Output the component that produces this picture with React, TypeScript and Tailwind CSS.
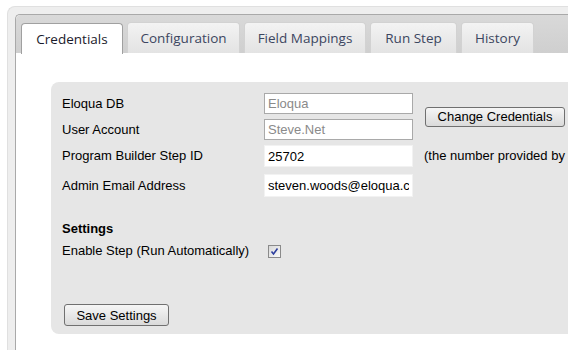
import React from "react";

const tabs = [
    { label: "Credentials", width: "w-[102px]", active: true },
    { label: "Configuration", width: "w-[113px]", active: false },
    { label: "Field Mappings", width: "w-[122px]", active: false },
    { label: "Run Step", width: "w-[87px]", active: false },
    { label: "History", width: "w-[73px]", active: false },
];

function TextField({ value, readOnly, height }: { value: string; readOnly?: boolean; height: string }) {
    return (
        <input
            type="text"
            readOnly
            value={value}
            className={`${height} w-[149px] shrink-0 bg-white px-[3px] text-[13px] outline-none ${
                readOnly ? "border border-[#a9a9a9] text-[#8a8a8a]" : "border border-[#f2f2f2] text-black"
            }`}
        />
    );
}

function OldButton({ children, className }: { children: React.ReactNode; className: string }) {
    return (
        <button
            type="button"
            className={`${className} shrink-0 rounded-[3px] border border-[#707070] bg-gradient-to-b from-[#f6f6f6] to-[#dadada] text-[13px] leading-none text-black`}
        >
            {children}
        </button>
    );
}

export default function App() {
    return (
        <div className="h-[350px] w-[568px] overflow-hidden bg-white font-['Liberation_Sans',Arial,sans-serif]">
            <div className="ml-[7px] mt-[6px] h-[400px] w-[640px] rounded-tl-[8px] border-l border-t border-[#e0e0e0] bg-[#eeeeee] pl-[7px] pt-[7px]">
                <div className="h-full rounded-tl-[5px] border-l border-t border-[#a9a9a9]">
                    {/* tab strip */}
                    <div className="flex h-[38px] items-end gap-[4px] rounded-tl-[5px] bg-gradient-to-b from-[#d9d9d9] to-[#cfcfcf] pl-[5px]">
                        {tabs.map((tab) => (
                            <div
                                key={tab.label}
                                className={`${tab.width} flex h-[31px] items-center justify-center rounded-t-[4px] border border-b-0 font-['Open_Sans',sans-serif] text-[13.5px] ${
                                    tab.active
                                        ? "relative top-px border-[#a0a0a0] bg-white text-[#1a1a2a]"
                                        : "border-[#d2d2d2] bg-gradient-to-b from-[#f3f3f3] to-[#e3e3e3] text-[#3c4660]"
                                }`}
                            >
                                {tab.label}
                            </div>
                        ))}
                    </div>

                    {/* tab body */}
                    <div className="h-full bg-white pl-[35px] pt-[29px]">
                        <div className="w-[600px] rounded-[8px] bg-[#e6e6e6] pb-[8px] pl-[11px] pt-[11px] text-[13px] text-black">
                            <div className="flex">
                                <div className="shrink-0">
                                    <div className="flex h-[21px] items-center">
                                        <span className="w-[202px] shrink-0">Eloqua DB</span>
                                        <TextField value="Eloqua" readOnly height="h-[21px]" />
                                    </div>
                                    <div className="mt-[5px] flex h-[21px] items-center">
                                        <span className="w-[202px] shrink-0">User Account</span>
                                        <TextField value="Steve.Net" readOnly height="h-[21px]" />
                                    </div>
                                </div>
                                <OldButton className="ml-[12px] h-[20px] w-[140px] self-center">Change Credentials</OldButton>
                            </div>

                            <div className="mt-[5px] flex h-[22px] items-center">
                                <span className="w-[202px] shrink-0">Program Builder Step ID</span>
                                <TextField value="25702" height="h-[22px]" />
                                <span className="ml-[11px] shrink-0 whitespace-nowrap">(the number provided by the Program Builder step)</span>
                            </div>

                            <div className="mt-[7px] flex h-[23px] items-center">
                                <span className="w-[202px] shrink-0">Admin Email Address</span>
                                <TextField value="steven.woods@eloqua.com" height="h-[23px]" />
                            </div>

                            <div className="mt-[24px] h-[16px] font-bold leading-[16px]">Settings</div>

                            <div className="mt-[6px] flex h-[16px] items-center">
                                <span className="w-[206px] shrink-0">Enable Step (Run Automatically)</span>
                                <span className="flex h-[13px] w-[13px] shrink-0 items-center justify-center border border-[#8a8a8a] bg-gradient-to-br from-[#d8d8d8] to-[#fafafa]">
                                    <svg width="9" height="9" viewBox="0 0 9 9">
                                        <path d="M1.5 4.5 L3.5 7 L7.5 1.5" fill="none" stroke="#2d3f9e" strokeWidth="1.6" />
                                    </svg>
                                </span>
                            </div>

                            <OldButton className="ml-[2px] mt-[45px] h-[22px] w-[105px]">Save Settings</OldButton>
                        </div>
                    </div>
                </div>
            </div>
        </div>
    );
}
